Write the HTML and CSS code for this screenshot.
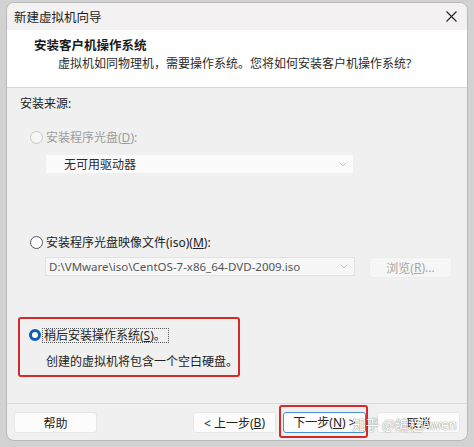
FILE: index.html
```html
<!DOCTYPE html>
<html lang="zh-CN">
<head>
<meta charset="utf-8">
<title>新建虚拟机向导</title>
<link rel="stylesheet" href="styles.css">
</head>
<body>
<div class="window">
  <div class="titlebar">
    <span class="title">新建虚拟机向导</span>
    <svg class="close" width="11" height="11" viewBox="0 0 11 11"><path d="M0.5 0.5 L10.5 10.5 M10.5 0.5 L0.5 10.5" stroke="#222" stroke-width="1.1" fill="none"/></svg>
  </div>
  <div class="header">
    <div class="h-title">安装客户机操作系统</div>
    <div class="h-sub">虚拟机如同物理机，需要操作系统。您将如何安装客户机操作系统?</div>
  </div>
  <div class="content">
    <div class="src-label">安装来源:</div>
    <div class="opt opt-disk">
      <span class="radio disabled"></span>
      <span class="lbl disabled-text">安装程序光盘(<u>D</u>):</span>
    </div>
    <div class="select sel-disk">
      <span class="sel-text dark">无可用驱动器</span>
      <svg class="chev" width="8" height="5" viewBox="0 0 8 5"><path d="M0.5 0.5 L4 4 L7.5 0.5" stroke="#c4c4c4" fill="none"/></svg>
    </div>
    <div class="opt opt-iso">
      <span class="radio"></span>
      <span class="lbl">安装程序光盘映像文件(iso)(<u>M</u>):</span>
    </div>
    <div class="iso-row">
      <div class="select sel-iso">
        <span class="sel-text path">D:\VMware\iso\CentOS-7-x86_64-DVD-2009.iso</span>
        <svg class="chev" width="8" height="5" viewBox="0 0 8 5"><path d="M0.5 0.5 L4 4 L7.5 0.5" stroke="#c4c4c4" fill="none"/></svg>
      </div>
      <div class="btn browse">浏览(<u>R</u>)...</div>
    </div>
    <div class="later-box">
      <div class="opt opt-later">
        <span class="radio checked"></span>
        <span class="lbl focus">稍后安装操作系统(<u>S</u>)。</span>
      </div>
      <div class="later-desc">创建的虚拟机将包含一个空白硬盘。</div>
    </div>
  </div>
  <div class="footer">
    <div class="btn help">帮助</div>
    <div class="nav">
      <div class="btn back">&lt; 上一步(<u>B</u>)</div>
      <div class="next-wrap"><div class="btn next">下一步(<u>N</u>) &gt;</div></div>
      <div class="btn cancel">取消</div>
    </div>
    <div class="watermark">知乎 @编程Awen</div>
  </div>
</div>
</body>
</html>
```
FILE: styles.css
```css
html, body {
  margin: 0;
  padding: 0;
}
body {
  width: 474px;
  height: 447px;
  background: #d2d2d2;
  font-family: "Noto Sans", "Noto Sans CJK SC", sans-serif;
  font-size: 12px;
  color: #222;
  overflow: hidden;
}
u {
  text-decoration: underline;
  text-underline-offset: 1px;
}
.window {
  margin: 2px 0 0 6px;
  width: 462px;
  height: 439px;
  box-sizing: border-box;
  border: 1px solid #b9b9b9;
  border-radius: 8px;
  background: #f0f0f0;
  overflow: hidden;
  display: flex;
  flex-direction: column;
  position: relative;
}
.titlebar {
  height: 27px;
  flex: none;
  background: #f3f1f1;
  display: flex;
  align-items: center;
  justify-content: space-between;
  padding: 0 10px 0 7px;
}
.title {
  font-size: 12.5px;
  color: #1c1c1c;
  font-family: "Noto Sans CJK SC", sans-serif;
}
.close {
  display: block;
}
.header {
  height: 58px;
  flex: none;
  box-sizing: border-box;
  background: #ffffff;
  border-bottom: 1px solid #d6d6d6;
  padding: 7px 0 0 27px;
}
.h-title {
  font-weight: bold;
  font-size: 12.5px;
  line-height: 18px;
  color: #1a1a1a;
}
.h-sub {
  padding-left: 24px;
  line-height: 18px;
  color: #2a2a2a;
}
.content {
  flex: 1;
  padding: 7px 0 0 11px;
  position: relative;
}
.src-label {
  line-height: 18px;
  color: #222;
  padding-left: 2px;
}
.opt {
  display: flex;
  align-items: center;
  height: 18px;
}
.opt-disk {
  margin-top: 15px;
  padding-left: 12px;
}
.radio {
  width: 11px;
  height: 11px;
  border: 1px solid #555;
  border-radius: 50%;
  box-sizing: content-box;
  background: #fff;
  margin-right: 3px;
  flex: none;
}
.radio.disabled {
  border-color: #c8c8c8;
  background: #f6f6f6;
}
.radio.checked {
  width: 6px;
  height: 6px;
  border: 3.5px solid #0a5fb4;
  background: #fff;
}
.disabled-text {
  color: #9c9c9c;
}
.select {
  height: 18px;
  background: #fbfbfb;
  display: flex;
  align-items: center;
  justify-content: space-between;
  box-sizing: border-box;
  width: 307px;
  padding: 0 6px 0 18px;
}
.sel-disk {
  margin: 9px 0 0 28px;
}
.sel-text.dark {
  color: #2a2a2a;
}
.opt-iso {
  margin-top: 60px;
  padding-left: 12px;
}
.iso-row {
  display: flex;
  align-items: flex-start;
  margin: 6px 0 0 27px;
  gap: 14px;
}
.sel-iso {
  height: 19px;
  width: 310px;
  padding-left: 3px;
  border: 1px solid #e2e2e2;
  background: #f7f7f7;
}
.path {
  color: #555;
  font-size: 11.5px;
}
.btn {
  background: #fcfcfc;
  border: 1px solid #e6e6e6;
  border-radius: 3px;
  box-sizing: border-box;
  display: flex;
  align-items: center;
  justify-content: center;
  height: 21px;
}
.browse {
  width: 83px;
  color: #a6a6a6;
  border-color: #ececec;
  background: #f6f6f6;
}
.later-box {
  margin: 39px 0 0 0;
  width: 222px;
  height: 60px;
  box-sizing: border-box;
  border: 2.5px solid #d42a2a;
  border-radius: 3px;
  padding: 7px 0 0 9px;
}
.opt-later .radio {
  margin-right: 2px;
}
.focus {
  outline: 1px dotted #555;
  outline-offset: 0;
  padding: 0 2px 0 1px;
  line-height: 13px;
}
.later-desc {
  margin: 9px 0 0 17px;
  line-height: 18px;
}
.footer {
  height: 37px;
  flex: none;
  border-top: 1px solid #dadada;
  display: flex;
  align-items: flex-start;
  justify-content: space-between;
  padding: 8px 7px 0 7px;
  box-sizing: border-box;
  position: relative;
}
.help {
  width: 83px;
  height: 21px;
}
.nav {
  display: flex;
  align-items: flex-start;
}
.back {
  width: 83px;
  margin-right: 3px;
}
.next-wrap {
  border: 2.5px solid #d42a2a;
  border-radius: 3px;
  padding: 5px 0 3px 2px;
  margin: -7.5px 9px 0 0;
}
.next {
  width: 83px;
  border: 1px solid #4a8fd0;
}
.cancel {
  width: 83px;
}
.watermark {
  position: absolute;
  left: 345px;
  top: 12px;
  font-family: "Noto Sans CJK SC", sans-serif;
  font-size: 14px;
  line-height: 16px;
  color: #ffffff;
  text-shadow: 0 0 1px rgba(0,0,0,0.55), 0 0 2px rgba(0,0,0,0.25);
  letter-spacing: -0.4px;
  opacity: 0.9;
}
```
